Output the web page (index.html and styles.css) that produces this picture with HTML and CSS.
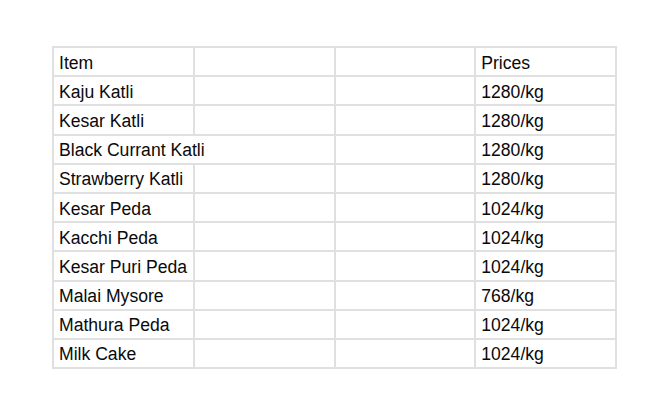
FILE: index.html
```html
<!DOCTYPE html>
<html>
<head>
<meta charset="utf-8">
<link rel="stylesheet" href="styles.css">
</head>
<body>
<table class="price-table">
  <colgroup><col><col><col><col></colgroup>
  <tr><td>Item</td><td></td><td></td><td>Prices</td></tr>
  <tr><td>Kaju Katli</td><td></td><td></td><td>1280/kg</td></tr>
  <tr><td>Kesar Katli</td><td></td><td></td><td>1280/kg</td></tr>
  <tr><td colspan="2">Black Currant Katli</td><td></td><td>1280/kg</td></tr>
  <tr><td>Strawberry Katli</td><td></td><td></td><td>1280/kg</td></tr>
  <tr><td>Kesar Peda</td><td></td><td></td><td>1024/kg</td></tr>
  <tr><td>Kacchi Peda</td><td></td><td></td><td>1024/kg</td></tr>
  <tr><td>Kesar Puri Peda</td><td></td><td></td><td>1024/kg</td></tr>
  <tr><td>Malai Mysore</td><td></td><td></td><td>768/kg</td></tr>
  <tr><td>Mathura Peda</td><td></td><td></td><td>1024/kg</td></tr>
  <tr><td>Milk Cake</td><td></td><td></td><td>1024/kg</td></tr>
</table>
</body>
</html>
```

FILE: styles.css
```css
html, body {
  margin: 0;
  padding: 0;
  background: #ffffff;
}
body {
  padding: 46px 0 0 52px;
  font-family: "Liberation Sans", Arial, sans-serif;
  color: #0a0a0a;
}
.price-table {
  border-collapse: collapse;
  table-layout: fixed;
  width: 565px;
}
.price-table col {
  width: 25%;
}
.price-table td {
  height: 27px;
  padding: 2px 5px 0 5px;
  border: 2px solid #e0e0e0;
  font-size: 17.6px;
  line-height: 20px;
  vertical-align: middle;
  white-space: nowrap;
  box-sizing: border-box;
}
.price-table tr {
  height: 29.2px;
}
```
